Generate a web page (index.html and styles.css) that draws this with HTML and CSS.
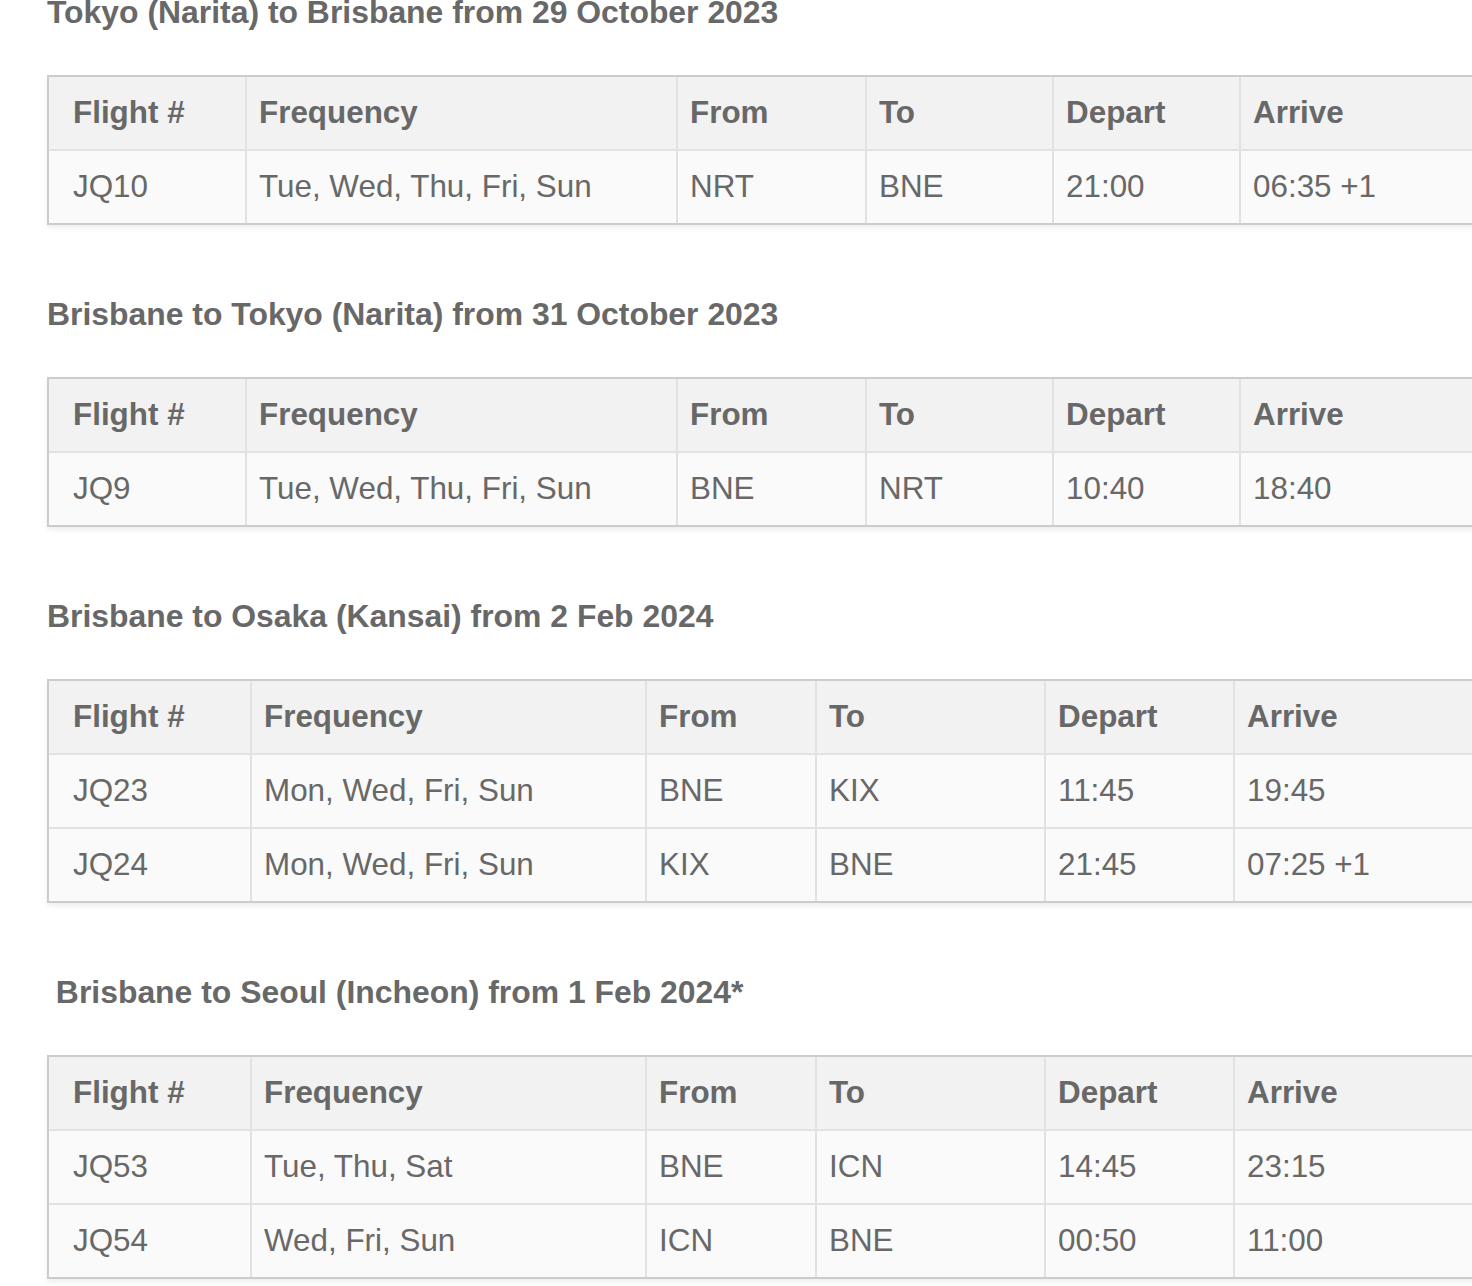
FILE: index.html
```html
<!DOCTYPE html>
<html lang="en">
<head>
<meta charset="utf-8">
<title>Flight schedules</title>
<link rel="stylesheet" href="styles.css">
</head>
<body>
<main class="page">
  <section class="route">
    <h2 class="route-title">Tokyo (Narita) to Brisbane from 29 October 2023</h2>
    <table class="sched sched-a">
      <thead>
        <tr><th class="c1">Flight #</th><th class="c2">Frequency</th><th class="c3">From</th><th class="c4">To</th><th class="c5">Depart</th><th class="c6">Arrive</th></tr>
      </thead>
      <tbody>
        <tr><td>JQ10</td><td>Tue, Wed, Thu, Fri, Sun</td><td>NRT</td><td>BNE</td><td>21:00</td><td>06:35 +1</td></tr>
      </tbody>
    </table>
  </section>
  <section class="route">
    <h2 class="route-title">Brisbane to Tokyo (Narita) from 31 October 2023</h2>
    <table class="sched sched-a">
      <thead>
        <tr><th class="c1">Flight #</th><th class="c2">Frequency</th><th class="c3">From</th><th class="c4">To</th><th class="c5">Depart</th><th class="c6">Arrive</th></tr>
      </thead>
      <tbody>
        <tr><td>JQ9</td><td>Tue, Wed, Thu, Fri, Sun</td><td>BNE</td><td>NRT</td><td>10:40</td><td>18:40</td></tr>
      </tbody>
    </table>
  </section>
  <section class="route">
    <h2 class="route-title">Brisbane to Osaka (Kansai) from 2 Feb 2024</h2>
    <table class="sched sched-b">
      <thead>
        <tr><th class="c1">Flight #</th><th class="c2">Frequency</th><th class="c3">From</th><th class="c4">To</th><th class="c5">Depart</th><th class="c6">Arrive</th></tr>
      </thead>
      <tbody>
        <tr><td>JQ23</td><td>Mon, Wed, Fri, Sun</td><td>BNE</td><td>KIX</td><td>11:45</td><td>19:45</td></tr>
        <tr><td>JQ24</td><td>Mon, Wed, Fri, Sun</td><td>KIX</td><td>BNE</td><td>21:45</td><td>07:25 +1</td></tr>
      </tbody>
    </table>
  </section>
  <section class="route">
    <h2 class="route-title">&nbsp;Brisbane to Seoul (Incheon) from 1 Feb 2024*</h2>
    <table class="sched sched-b">
      <thead>
        <tr><th class="c1">Flight #</th><th class="c2">Frequency</th><th class="c3">From</th><th class="c4">To</th><th class="c5">Depart</th><th class="c6">Arrive</th></tr>
      </thead>
      <tbody>
        <tr><td>JQ53</td><td>Tue, Thu, Sat</td><td>BNE</td><td>ICN</td><td>14:45</td><td>23:15</td></tr>
        <tr><td>JQ54</td><td>Wed, Fri, Sun</td><td>ICN</td><td>BNE</td><td>00:50</td><td>11:00</td></tr>
      </tbody>
    </table>
  </section>
</main>
</body>
</html>
```

FILE: styles.css
```css
html, body {
  margin: 0;
  padding: 0;
  background: #ffffff;
  overflow: hidden;
}

body {
  font-family: "Liberation Sans", Arial, Helvetica, sans-serif;
  color: #686868;
}

.page {
  padding-left: 47px;
  margin-top: -6px;
}

.route {
  margin-bottom: 71px;
}

.route-title {
  margin: 0 0 45px 0;
  font-size: 31.9px;
  line-height: 36px;
  font-weight: bold;
  color: #686868;
  white-space: nowrap;
}

.sched {
  border-collapse: separate;
  border-spacing: 0;
  table-layout: fixed;
  border: 2px solid #cccccc;
  box-shadow: 0 3px 5px rgba(0, 0, 0, 0.07);
  font-size: 31.4px;
  line-height: 36px;
}

.sched th,
.sched td {
  box-sizing: border-box;
  text-align: left;
  padding: 18px 8px 18px 12px;
  border-left: 2px solid #e2e2e2;
  white-space: nowrap;
  vertical-align: top;
}

.sched th {
  background: #f2f2f2;
  font-weight: bold;
}

.sched td {
  background: #fafafa;
  font-weight: normal;
  border-top: 2px solid #e2e2e2;
}

.sched th:first-child,
.sched td:first-child {
  border-left: 0;
  padding-left: 24px;
}

.sched-a { width: 1434px; }
.sched-a .c1 { width: 196px; }
.sched-a .c2 { width: 431px; }
.sched-a .c3 { width: 189px; }
.sched-a .c4 { width: 187px; }
.sched-a .c5 { width: 187px; }
.sched-a .c6 { width: 240px; }

.sched-b { width: 1428px; }
.sched-b .c1 { width: 201px; }
.sched-b .c2 { width: 395px; }
.sched-b .c3 { width: 170px; }
.sched-b .c4 { width: 229px; }
.sched-b .c5 { width: 189px; }
.sched-b .c6 { width: 240px; }
```
